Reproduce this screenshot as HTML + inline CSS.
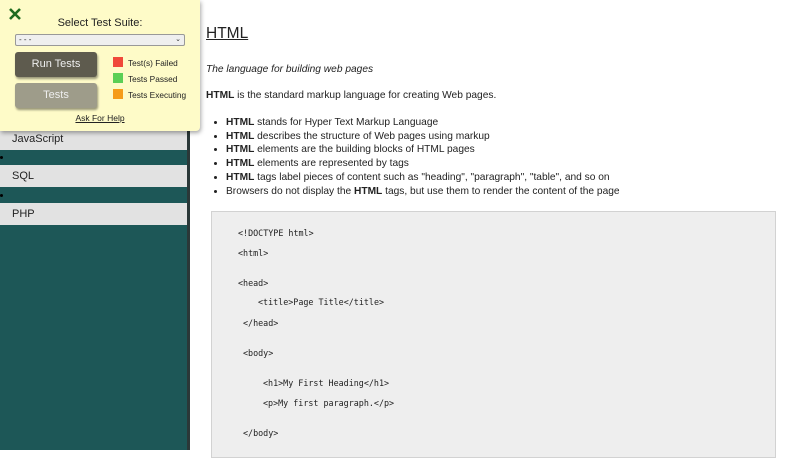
<!DOCTYPE html>
<html><head><style>
body{margin:0;width:800px;height:450px;overflow:hidden;background:#fff;font-family:"Liberation Sans",sans-serif;position:relative}
#side{position:absolute;left:0;top:0;width:187px;height:450px;background:#1d5757;border-right:3px solid #2b3838}
.item{position:absolute;left:0;width:187px;height:22px;background:#e2e2e2;font-size:11px;color:#222;line-height:22px;text-indent:12px;font-family:"Liberation Sans",sans-serif}
.dot{position:absolute;left:0;width:3px;height:3px;border-radius:50%;background:#000}
#pop{position:absolute;left:0;top:0;width:200px;height:131px;background:#fefbc8;border-bottom-right-radius:4px;box-shadow:1px 2px 4px rgba(0,0,0,.35);font-family:"Liberation Sans",sans-serif}
.btn{position:absolute;left:15px;width:82px;height:25px;border-radius:3px;color:#eee;font-size:11px;text-align:center;line-height:25px;box-shadow:1px 2px 2px rgba(0,0,0,.4)}
.lg{position:absolute;left:113px;font-size:8.3px;color:#222}
.lg i{position:absolute;left:0;top:-1px;width:10px;height:10px}
.lg span{position:absolute;left:15px;white-space:nowrap}
#main{position:absolute;left:206px;top:0;font-size:10.2px;color:#222;font-family:"Liberation Sans",sans-serif}
ul{margin:0;padding-left:20px}
li{line-height:13.7px}
#code{position:absolute;left:211px;top:211px;width:563px;height:245px;background:#eeeeee;border:1px solid #d2d2d2;font-family:"DejaVu Sans Mono",monospace;font-size:8.4px;color:#222}
#code div{position:absolute;white-space:pre}
</style></head><body>
<div id="side">
<div class="item" style="top:128px">JavaScript</div>
<div class="dot" style="top:156px"></div>
<div class="item" style="top:165px">SQL</div>
<div class="dot" style="top:194px"></div>
<div class="item" style="top:203px">PHP</div>
</div>
<div id="pop">
<svg style="position:absolute;left:9px;top:8px" width="12" height="12" viewBox="0 0 12 12"><path d="M1 1L11 11M11 1L1 11" stroke="#1e6b1e" stroke-width="2.6"/></svg>
<div style="position:absolute;left:0;width:200px;top:17px;text-align:center;font-size:11px;color:#222">Select Test Suite:</div>
<div style="position:absolute;left:15px;top:34px;width:168px;height:10px;background:#efefef;border:1px solid #999;border-radius:2px;font-size:8px;line-height:10px;color:#333;text-indent:3px">- - -<span style="position:absolute;right:3px;font-size:7px">&#8964;</span></div>
<div class="btn" style="top:52px;background:#5e5b4e">Run Tests</div>
<div class="btn" style="top:83px;background:#9e9c8a">Tests</div>
<div class="lg" style="top:58px"><i style="background:#f0493a"></i><span>Test(s) Failed</span></div>
<div class="lg" style="top:74px"><i style="background:#5ccf55"></i><span>Tests Passed</span></div>
<div class="lg" style="top:90px"><i style="background:#f59c1a"></i><span>Tests Executing</span></div>
<div style="position:absolute;left:0;width:200px;top:113px;text-align:center;font-size:8.5px;color:#222;text-decoration:underline">Ask For Help</div>
</div>
<div id="main">
<div style="position:absolute;top:25px;font-size:15.5px;text-decoration:underline;white-space:nowrap">HTML</div>
<div style="position:absolute;top:64px;font-style:italic;white-space:nowrap">The language for building web pages</div>
<div style="position:absolute;top:90px;white-space:nowrap"><b>HTML</b> is the standard markup language for creating Web pages.</div>
<ul style="position:absolute;top:116px;white-space:nowrap;width:600px">
<li><b>HTML</b> stands for Hyper Text Markup Language</li>
<li><b>HTML</b> describes the structure of Web pages using markup</li>
<li><b>HTML</b> elements are the building blocks of HTML pages</li>
<li><b>HTML</b> elements are represented by tags</li>
<li><b>HTML</b> tags label pieces of content such as "heading", "paragraph", "table", and so on</li>
<li>Browsers do not display the <b>HTML</b> tags, but use them to render the content of the page</li>
</ul>
</div>
<div id="code">
<div style="left:26px;top:16px">&lt;!DOCTYPE html&gt;</div>
<div style="left:26px;top:36px">&lt;html&gt;</div>
<div style="left:26px;top:66px">&lt;head&gt;</div>
<div style="left:46px;top:85px">&lt;title&gt;Page Title&lt;/title&gt;</div>
<div style="left:31px;top:106px">&lt;/head&gt;</div>
<div style="left:31px;top:136px">&lt;body&gt;</div>
<div style="left:51px;top:166px">&lt;h1&gt;My First Heading&lt;/h1&gt;</div>
<div style="left:51px;top:186px">&lt;p&gt;My first paragraph.&lt;/p&gt;</div>
<div style="left:31px;top:216px">&lt;/body&gt;</div>
</div>
</body></html>
